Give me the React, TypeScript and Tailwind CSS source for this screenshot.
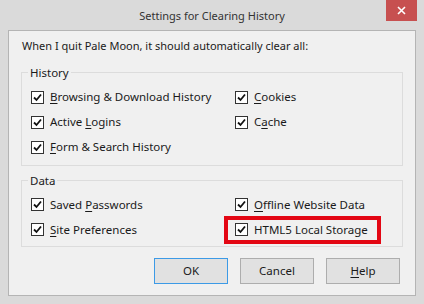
import type { ReactNode } from 'react';

const font = { fontFamily: '"Noto Sans", "Open Sans", sans-serif' };

/* ------------------------------------------------------------- */
/* Pieces                                                        */
/* ------------------------------------------------------------- */
function Check({ children, tight }: { children: ReactNode; tight?: boolean }) {
  return (
    <div className={'flex items-center gap-[6px] ' + (tight ? 'h-[20px]' : 'h-[25px]')}>
      <span className="flex h-[13px] w-[13px] items-center justify-center border border-[#333] bg-white">
        <svg width="9" height="9" viewBox="0 0 9 9">
          <path d="M1 4.5 L3.5 7 L8 1.5" fill="none" stroke="#111" strokeWidth="1.8" />
        </svg>
      </span>
      <span className="text-[11.5px] leading-none text-[#1a1a1a]">{children}</span>
    </div>
  );
}

function Key({ children }: { children: ReactNode }) {
  return <span className="underline underline-offset-2">{children}</span>;
}

function Group({ title, children }: { title: string; children: ReactNode }) {
  return (
    <fieldset className="mx-[12px] border border-[#dcdcdc] px-[9px]">
      <legend className="ml-[-3px] px-[2px] text-[11.5px] leading-none text-[#1a1a1a]">
        {title}
      </legend>
      {children}
    </fieldset>
  );
}

function Button({ children, primary }: { children: ReactNode; primary?: boolean }) {
  return (
    <button
      className={
        'h-[26px] w-[74px] bg-[#e1e1e1] text-[11.5px] text-[#1a1a1a] border ' +
        (primary ? 'border-[#3c9ae6]' : 'border-[#adadad]')
      }
    >
      {children}
    </button>
  );
}

/* ------------------------------------------------------------- */
/* UI                                                            */
/* ------------------------------------------------------------- */
export default function App() {
  return (
    <div style={font} className="flex h-[304px] w-[424px] flex-col bg-[#dadada]">
      {/* title bar */}
      <div className="grid h-[30px] grid-cols-[1fr_auto_1fr] items-start">
        <div />
        <div className="pt-[8px] text-[11px] text-[#333]">Settings for Clearing History</div>
        <div className="flex justify-end pr-[7px]">
          <div className="flex h-[21px] w-[31px] items-center justify-center bg-[#c75050]">
            <svg width="9" height="9" viewBox="0 0 9 9">
              <path d="M1 1 L8 8 M8 1 L1 8" stroke="white" strokeWidth="1.6" />
            </svg>
          </div>
        </div>
      </div>

      {/* client area */}
      <div className="mx-[8px] flex h-[266px] flex-col border border-[#b4b4b4] bg-[#f0f0f0]">
        <div className="px-[13px] pt-[9px] pb-[16px] text-[11px] leading-none text-[#1a1a1a]">
          When I quit Pale Moon, it should automatically clear all:
        </div>

        <Group title="History">
          <div className="grid grid-cols-[204px_1fr] pt-[6px] pb-[5px]">
            <Check>
              <Key>B</Key>rowsing &amp; Download History
            </Check>
            <Check>
              <Key>C</Key>ookies
            </Check>
            <Check>
              Active <Key>L</Key>ogins
            </Check>
            <Check>
              C<Key>a</Key>che
            </Check>
            <Check>
              <Key>F</Key>orm &amp; Search History
            </Check>
          </div>
        </Group>

        <div className="h-[9px]" />

        <Group title="Data">
          <div className="grid grid-cols-[204px_1fr] pt-[6px] pb-[4px]">
            <Check>
              Saved <Key>P</Key>asswords
            </Check>
            <Check>
              <Key>O</Key>ffline Website Data
            </Check>
            <Check>
              <Key>S</Key>ite Preferences
            </Check>
            <div className="-my-[1.5px] -ml-[11px] w-fit border-[4px] border-[#e30613] pl-[7px] pr-[9px]">
              <Check tight>HTML5 Local Storage</Check>
            </div>
          </div>
        </Group>

        <div className="flex justify-end gap-[12px] pr-[15px] pt-[11px]">
          <Button primary>OK</Button>
          <Button>Cancel</Button>
          <Button>
            <Key>H</Key>elp
          </Button>
        </div>
      </div>
    </div>
  );
}
